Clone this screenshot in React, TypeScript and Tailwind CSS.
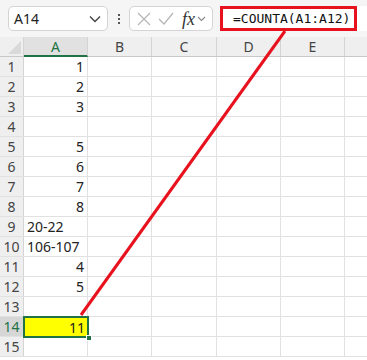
import React from "react";

const cols = [
  { l: "A", w: 64 },
  { l: "B", w: 64 },
  { l: "C", w: 65 },
  { l: "D", w: 64 },
  { l: "E", w: 64 },
  { l: "", w: 40 },
];

const data: (string | number | null)[] = [1, 2, 3, null, 5, 6, 7, 8, "20-22", "106-107", 4, 5, null, 11, null];

export default function App() {
  return (
    <div
      className="relative w-[367px] h-[360px] overflow-hidden bg-white text-[#222]"
      style={{ fontFamily: "'Noto Sans', 'Open Sans', sans-serif" }}
    >
      {/* top bar */}
      <div className="flex items-center h-[37px] bg-[#f5f5f5] pl-[8px]">
        <div className="flex items-center justify-between shrink-0 w-[100px] h-[25px] bg-white border border-[#d4d4d4] rounded-[5px] pl-[5px] pr-[6px] text-[14px]">
          <span>A14</span>
          <svg width="12" height="8" viewBox="0 0 12 8" fill="none" stroke="#444" strokeWidth="1.4">
            <path d="M1 1.5l5 5 5-5" />
          </svg>
        </div>
        <div className="flex flex-col shrink-0 gap-[2px] w-[21px] items-center">
          <div className="w-[2px] h-[2px] bg-[#555]" />
          <div className="w-[2px] h-[2px] bg-[#555]" />
          <div className="w-[2px] h-[2px] bg-[#555]" />
        </div>
        <div className="flex items-center shrink-0 w-[84px] h-[25px] bg-white border border-[#d4d4d4] rounded-[5px] pl-[7px]">
          <svg width="14" height="14" viewBox="0 0 14 14" stroke="#b5b5b5" strokeWidth="1.2" fill="none">
            <path d="M1 1l12 12M13 1L1 13" />
          </svg>
          <svg width="16" height="14" viewBox="0 0 16 14" stroke="#b5b5b5" strokeWidth="1.2" fill="none" className="ml-[7px]">
            <path d="M1 7l5 5L15 1" />
          </svg>
          <span
            className="ml-[8px] text-[18px] italic text-[#333] leading-none"
            style={{ fontFamily: "'Liberation Serif', serif" }}
          >
            fx
          </span>
          <svg width="9" height="6" viewBox="0 0 9 6" fill="none" stroke="#888" strokeWidth="1.1" className="ml-[2px]">
            <path d="M1 1l3.5 3.5L8 1" />
          </svg>
        </div>
        <div className="flex-1 h-[25px] ml-[7px] bg-white flex items-center">
          <div
            className="flex items-center shrink-0 h-[25px] w-[137px] border-[3px] border-[#e8121f] pl-[10px] text-[13px] text-[#111]"
            style={{ fontFamily: "'DejaVu Sans Mono', monospace" }}
          >
            =COUNTA(A1:A12)
          </div>
        </div>
      </div>

      {/* header row */}
      <div className="flex h-[20px] bg-[#efefef] border-b border-[#c8c8c8]">
        <div className="w-[24px] shrink-0 h-full relative border-r border-[#d4d4d4]">
          <svg width="24" height="19" className="absolute inset-0">
            <path d="M8 17L21 4V17Z" fill="#d9d9d9" />
          </svg>
        </div>
        {cols.map((c, i) => (
          <div
            key={i}
            className={
              i === 0
                ? "flex items-center justify-center shrink-0 h-[20px] bg-[#e1e1e1] border-b-2 border-[#217346] text-[#217346] text-[14px] border-r border-r-[#d4d4d4]"
                : "flex items-center justify-center shrink-0 h-full text-[#444] text-[14px] border-r border-[#d4d4d4]"
            }
            style={{ width: c.w }}
          >
            {c.l}
          </div>
        ))}
      </div>

      {/* rows */}
      {data.map((v, r) => {
        const sel = r === 13;
        return (
          <div key={r} className="flex h-[20px] border-b border-[#e1e1e1]">
            <div
              className={
                sel
                  ? "w-[24px] shrink-0 flex items-center justify-center text-[14px] text-[#217346] bg-[#d6d6d6] border-r border-[#bdbdbd]"
                  : "w-[24px] shrink-0 flex items-center justify-center text-[14px] text-[#444] bg-[#efefef] border-r border-[#d4d4d4]"
              }
            >
              {r + 1}
            </div>
            {cols.map((c, i) => (
              <div
                key={i}
                className={
                  i === 0 && sel
                    ? "relative shrink-0 h-[20px] flex items-center justify-end pr-[3px] bg-[#ffff00] text-[14px] outline-2 outline-[#217346] -outline-offset-1 z-10"
                    : i === 0 && typeof v === "string"
                    ? "shrink-0 flex items-center justify-start pl-[3px] text-[14px] border-r border-[#e1e1e1]"
                    : "shrink-0 flex items-center justify-end pr-[3px] text-[14px] border-r border-[#e1e1e1]"
                }
                style={{ width: c.w }}
              >
                {i === 0 && v !== null ? v : ""}
                {i === 0 && sel && (
                  <div className="absolute right-[-4px] bottom-[-4px] w-[6px] h-[6px] bg-[#217346] border border-white" />
                )}
              </div>
            ))}
          </div>
        );
      })}

      {/* arrow line */}
      <svg className="absolute inset-0 pointer-events-none z-20" width="367" height="360">
        <line x1="285" y1="31" x2="81" y2="315" stroke="#e8121f" strokeWidth="3" />
      </svg>
    </div>
  );
}
